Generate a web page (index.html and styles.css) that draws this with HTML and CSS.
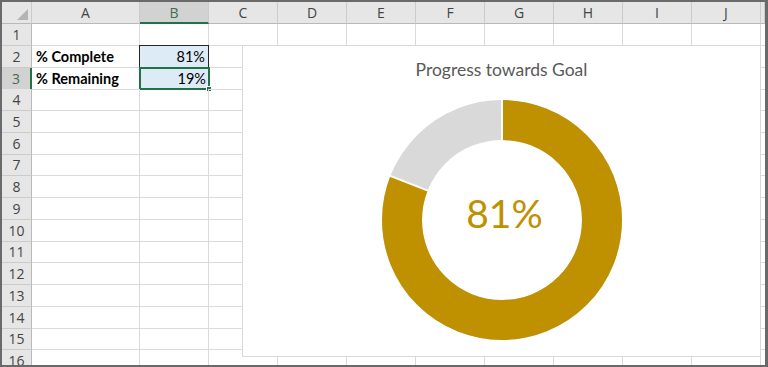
FILE: index.html
```html
<!DOCTYPE html>
<html lang="en">
<head>
   <meta charset="UTF-8">
   <meta name="viewport" content="width=device-width, initial-scale=1.0">
   <title>Progress towards Goal</title>
   <link rel="stylesheet" href="styles.css">
</head>
<body>
   <div class="frame">
      <div class="sheet">
         <div class="row head">
            <div class="corner"></div><div class="ch">A</div><div class="ch sel">B</div><div class="ch">C</div><div class="ch">D</div><div class="ch">E</div><div class="ch">F</div><div class="ch">G</div><div class="ch">H</div><div class="ch">I</div><div class="ch">J</div><div class="ch"></div>
         </div>
         <div class="row"><div class="rh">1</div><div class="c"></div><div class="c"></div><div class="c"></div><div class="c"></div><div class="c"></div><div class="c"></div><div class="c"></div><div class="c"></div><div class="c"></div><div class="c"></div><div class="c"></div></div>
         <div class="row"><div class="rh">2</div><div class="c label">% Complete</div><div class="c num boxed">81%</div><div class="c"></div><div class="c"></div><div class="c"></div><div class="c"></div><div class="c"></div><div class="c"></div><div class="c"></div><div class="c"></div><div class="c"></div></div>
         <div class="row"><div class="rh sel">3</div><div class="c label">% Remaining</div><div class="c num active">19%<span class="handle"></span></div><div class="c"></div><div class="c"></div><div class="c"></div><div class="c"></div><div class="c"></div><div class="c"></div><div class="c"></div><div class="c"></div><div class="c"></div></div>
         <div class="row"><div class="rh">4</div><div class="c"></div><div class="c"></div><div class="c"></div><div class="c"></div><div class="c"></div><div class="c"></div><div class="c"></div><div class="c"></div><div class="c"></div><div class="c"></div><div class="c"></div></div>
         <div class="row"><div class="rh">5</div><div class="c"></div><div class="c"></div><div class="c"></div><div class="c"></div><div class="c"></div><div class="c"></div><div class="c"></div><div class="c"></div><div class="c"></div><div class="c"></div><div class="c"></div></div>
         <div class="row"><div class="rh">6</div><div class="c"></div><div class="c"></div><div class="c"></div><div class="c"></div><div class="c"></div><div class="c"></div><div class="c"></div><div class="c"></div><div class="c"></div><div class="c"></div><div class="c"></div></div>
         <div class="row"><div class="rh">7</div><div class="c"></div><div class="c"></div><div class="c"></div><div class="c"></div><div class="c"></div><div class="c"></div><div class="c"></div><div class="c"></div><div class="c"></div><div class="c"></div><div class="c"></div></div>
         <div class="row"><div class="rh">8</div><div class="c"></div><div class="c"></div><div class="c"></div><div class="c"></div><div class="c"></div><div class="c"></div><div class="c"></div><div class="c"></div><div class="c"></div><div class="c"></div><div class="c"></div></div>
         <div class="row"><div class="rh">9</div><div class="c"></div><div class="c"></div><div class="c"></div><div class="c"></div><div class="c"></div><div class="c"></div><div class="c"></div><div class="c"></div><div class="c"></div><div class="c"></div><div class="c"></div></div>
         <div class="row"><div class="rh">10</div><div class="c"></div><div class="c"></div><div class="c"></div><div class="c"></div><div class="c"></div><div class="c"></div><div class="c"></div><div class="c"></div><div class="c"></div><div class="c"></div><div class="c"></div></div>
         <div class="row"><div class="rh">11</div><div class="c"></div><div class="c"></div><div class="c"></div><div class="c"></div><div class="c"></div><div class="c"></div><div class="c"></div><div class="c"></div><div class="c"></div><div class="c"></div><div class="c"></div></div>
         <div class="row"><div class="rh">12</div><div class="c"></div><div class="c"></div><div class="c"></div><div class="c"></div><div class="c"></div><div class="c"></div><div class="c"></div><div class="c"></div><div class="c"></div><div class="c"></div><div class="c"></div></div>
         <div class="row"><div class="rh">13</div><div class="c"></div><div class="c"></div><div class="c"></div><div class="c"></div><div class="c"></div><div class="c"></div><div class="c"></div><div class="c"></div><div class="c"></div><div class="c"></div><div class="c"></div></div>
         <div class="row"><div class="rh">14</div><div class="c"></div><div class="c"></div><div class="c"></div><div class="c"></div><div class="c"></div><div class="c"></div><div class="c"></div><div class="c"></div><div class="c"></div><div class="c"></div><div class="c"></div></div>
         <div class="row"><div class="rh">15</div><div class="c"></div><div class="c"></div><div class="c"></div><div class="c"></div><div class="c"></div><div class="c"></div><div class="c"></div><div class="c"></div><div class="c"></div><div class="c"></div><div class="c"></div></div>
         <div class="row"><div class="rh">16</div><div class="c"></div><div class="c"></div><div class="c"></div><div class="c"></div><div class="c"></div><div class="c"></div><div class="c"></div><div class="c"></div><div class="c"></div><div class="c"></div><div class="c"></div></div>
      </div>

      <!-- floating chart object -->
      <div class="chart">
         <div class="chart-title">Progress towards Goal</div>
         <div class="donut">
            <svg width="240" height="240" viewBox="0 0 240 240">
               <circle cx="120" cy="120" r="100" fill="none" stroke="#d9d9d9" stroke-width="40"/>
               <circle cx="120" cy="120" r="100" fill="none" stroke="#bf9000" stroke-width="40"
                  stroke-dasharray="508.94 628.32" transform="rotate(-90 120 120)"/>
               <line x1="120" y1="-1" x2="120" y2="41" stroke="#fff" stroke-width="2"/>
               <line x1="7.5" y1="75.5" x2="46.5" y2="90.9" stroke="#fff" stroke-width="2"/>
            </svg>
            <div class="pct">81%</div>
         </div>
      </div>
   </div>
</body>
</html>
```

FILE: styles.css
```css
/* Reset básico */
* {
   margin: 0;
   padding: 0;
   box-sizing: border-box;
}

body {
   background-color: #ffffff;
   font-family: "Open Sans", sans-serif;
}

.frame {
   position: relative;
   width: 768px;
   height: 367px;
   border-top: 2px solid #6a6a6a;
   border-left: 2px solid #6a6a6a;
   border-right: 3px solid #6a6a6a;
   border-bottom: 2px solid #6a6a6a;
   overflow: hidden;
}

.sheet {
   display: flex;
   flex-direction: column;
}

.row {
   display: grid;
   grid-template-columns: 30px 108px repeat(9, 69px) 1fr;
   height: 21.75px;
   flex-shrink: 0;
}

.row.head {
   height: 22px;
}

/* Cabeçalhos */
.corner,
.ch {
   background-color: #e6e6e6;
   border-right: 1px solid #cbcbcb;
   border-bottom: 1px solid #b9b9b9;
}

.corner {
   position: relative;
}

.corner::after {
   content: "";
   position: absolute;
   right: 3px;
   bottom: 3px;
   border-left: 11px solid transparent;
   border-bottom: 11px solid #b4b4b4;
}

.ch {
   display: flex;
   align-items: center;
   justify-content: center;
   font-size: 14px;
   color: #444444;
}

.ch.sel {
   background-color: #d2d2d2;
   border-bottom: 2px solid #217346;
   color: #3c6e4f;
}

.rh {
   display: flex;
   align-items: center;
   justify-content: center;
   background-color: #e6e6e6;
   border-right: 1px solid #b9b9b9;
   border-bottom: 1px solid #cbcbcb;
   font-size: 14px;
   color: #444444;
}

.rh.sel {
   background-color: #d2d2d2;
   border-right: 2px solid #217346;
   color: #3c6e4f;
}

/* Células */
.c {
   position: relative;
   display: flex;
   align-items: center;
   padding: 0 3px;
   border-right: 1px solid #dadada;
   border-bottom: 1px solid #dadada;
   font-family: Lato, "Open Sans", sans-serif;
   font-size: 14.5px;
   color: #000000;
   white-space: nowrap;
}

.c.label {
   font-weight: bold;
   padding-left: 4px;
}

.c.num {
   justify-content: flex-end;
   background-color: #ddebf7;
}

.c.boxed {
   border: 1px solid #262626;
   margin: -1px 0 0 -1px;
   width: 70px;
   height: 22.75px;
}

.c.active {
   border: 2px solid #217346;
   margin: -1px 0 0 -1px;
   width: 71px;
   height: 23.75px;
   padding-right: 2px;
}

.handle {
   position: absolute;
   right: -4px;
   bottom: -4px;
   width: 6px;
   height: 6px;
   background-color: #217346;
   border: 1px solid #ffffff;
}

/* Gráfico */
.chart {
   position: absolute;
   left: 240px;
   top: 43px;
   width: 519px;
   height: 312px;
   background-color: #ffffff;
   border: 1px solid #d9d9d9;
   display: flex;
   flex-direction: column;
   align-items: center;
   padding-top: 12px;
}

.chart-title {
   font-family: Lato, "Open Sans", sans-serif;
   font-size: 17.5px;
   line-height: 24px;
   color: #595959;
}

.donut {
   position: relative;
   width: 240px;
   height: 240px;
   margin-top: 18px;
}

.donut svg {
   display: block;
}

.pct {
   position: absolute;
   inset: 0;
   display: flex;
   align-items: center;
   justify-content: center;
   padding: 0 0 14px 6px;
   font-family: Lato, "Open Sans", sans-serif;
   font-size: 39px;
   color: #bf9000;
}
```
